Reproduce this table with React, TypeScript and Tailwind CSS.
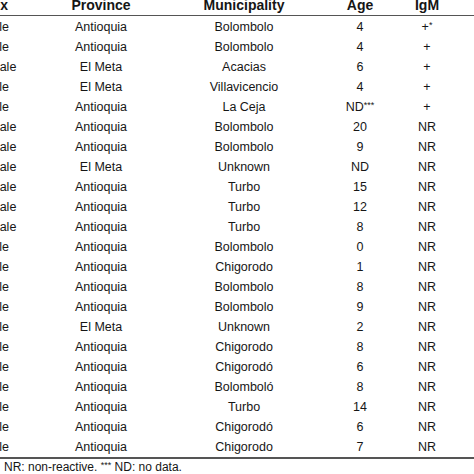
const rows: [string, string, string, string, string][] = [
  ['Male', 'Antioquia', 'Bolombolo', '4', '+*'],
  ['Male', 'Antioquia', 'Bolombolo', '4', '+'],
  ['Female', 'El Meta', 'Acacias', '6', '+'],
  ['Male', 'El Meta', 'Villavicencio', '4', '+'],
  ['Male', 'Antioquia', 'La Ceja', 'ND***', '+'],
  ['Female', 'Antioquia', 'Bolombolo', '20', 'NR'],
  ['Female', 'Antioquia', 'Bolombolo', '9', 'NR'],
  ['Female', 'El Meta', 'Unknown', 'ND', 'NR'],
  ['Female', 'Antioquia', 'Turbo', '15', 'NR'],
  ['Female', 'Antioquia', 'Turbo', '12', 'NR'],
  ['Female', 'Antioquia', 'Turbo', '8', 'NR'],
  ['Male', 'Antioquia', 'Bolombolo', '0', 'NR'],
  ['Male', 'Antioquia', 'Chigorodo', '1', 'NR'],
  ['Male', 'Antioquia', 'Bolombolo', '8', 'NR'],
  ['Male', 'Antioquia', 'Bolombolo', '9', 'NR'],
  ['Male', 'El Meta', 'Unknown', '2', 'NR'],
  ['Male', 'Antioquia', 'Chigorodo', '8', 'NR'],
  ['Male', 'Antioquia', 'Chigorodó', '6', 'NR'],
  ['Male', 'Antioquia', 'Bolomboló', '8', 'NR'],
  ['Male', 'Antioquia', 'Turbo', '14', 'NR'],
  ['Male', 'Antioquia', 'Chigorodó', '6', 'NR'],
  ['Male', 'Antioquia', 'Chigorodo', '7', 'NR'],
];

const cols = 'grid grid-cols-[91px_120px_166px_66px_68px_29px] text-center';

// small raised asterisks used for the table notes
function Mark({ text, footer }: { text: string; footer?: boolean }) {
  return (
    <span
      className={`inline-block text-[9px] leading-none align-top relative ${footer ? 'top-[1px]' : 'top-[4px]'}`}
    >
      {text}
    </span>
  );
}

function Cell({ value }: { value: string }) {
  const m = value.match(/^(.*?)(\*+)$/);
  if (!m) return <span>{value}</span>;
  return (
    <span>
      {m[1]}
      <Mark text={m[2]} />
    </span>
  );
}

export default function App() {
  return (
    <div className="w-[474px] h-[474px] overflow-hidden bg-white text-[#161616] font-['Liberation_Sans',Arial,sans-serif]">
      <div className="-ml-[50px] w-[540px]">
        <div className={`${cols} h-[15.5px] leading-[10px] text-[14px] font-bold border-b-[1.5px] border-[#555]`}>
          <div>Sex</div>
          <div>Province</div>
          <div>Municipality</div>
          <div>Age</div>
          <div>IgM</div>
          <div />
        </div>
        <div className="pt-px border-b-2 border-[#555]">
          {rows.map((r, i) => (
            <div key={i} className={`${cols} h-[20px] leading-[20px] text-[12.5px]`}>
              <div>{r[0]}</div>
              <div>{r[1]}</div>
              <div>{r[2]}</div>
              <div>
                <Cell value={r[3]} />
              </div>
              <div>
                <Cell value={r[4]} />
              </div>
              <div />
            </div>
          ))}
        </div>
      </div>
      <p className="pl-[4px] pt-px text-[12px] leading-[14px]">
        NR: non-reactive. <Mark text="***" footer /> ND: no data.
      </p>
    </div>
  );
}
